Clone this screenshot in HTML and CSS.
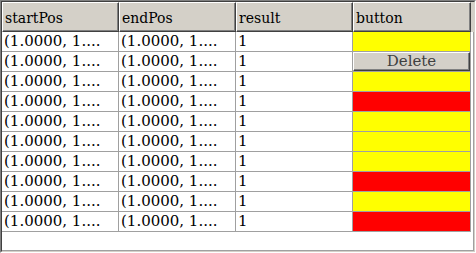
FILE: index.html
```html
<!DOCTYPE html>
<html lang="en">
<head>
    <meta charset="UTF-8">
    <title>Table</title>
    <link rel="stylesheet" href="styles.css">
</head>
<body>
    <div class="frame">
        <div class="view">
            <div class="header">
                <div class="head-cell">startPos</div>
                <div class="head-cell">endPos</div>
                <div class="head-cell">result</div>
                <div class="head-cell last">button</div>
            </div>
            <div class="rows">
                <div class="cell">(1.0000, 1....</div><div class="cell">(1.0000, 1....</div><div class="cell">1</div><div class="cell yellow"></div>
                <div class="cell">(1.0000, 1....</div><div class="cell">(1.0000, 1....</div><div class="cell">1</div><div class="cell btn-cell"><button class="delete-button">Delete</button></div>
                <div class="cell">(1.0000, 1....</div><div class="cell">(1.0000, 1....</div><div class="cell">1</div><div class="cell yellow"></div>
                <div class="cell">(1.0000, 1....</div><div class="cell">(1.0000, 1....</div><div class="cell">1</div><div class="cell red"></div>
                <div class="cell">(1.0000, 1....</div><div class="cell">(1.0000, 1....</div><div class="cell">1</div><div class="cell yellow"></div>
                <div class="cell">(1.0000, 1....</div><div class="cell">(1.0000, 1....</div><div class="cell">1</div><div class="cell yellow"></div>
                <div class="cell">(1.0000, 1....</div><div class="cell">(1.0000, 1....</div><div class="cell">1</div><div class="cell yellow"></div>
                <div class="cell">(1.0000, 1....</div><div class="cell">(1.0000, 1....</div><div class="cell">1</div><div class="cell red"></div>
                <div class="cell">(1.0000, 1....</div><div class="cell">(1.0000, 1....</div><div class="cell">1</div><div class="cell yellow"></div>
                <div class="cell">(1.0000, 1....</div><div class="cell">(1.0000, 1....</div><div class="cell">1</div><div class="cell red"></div>
            </div>
        </div>
    </div>
</body>
</html>
```

FILE: styles.css
```css
body {
    margin: 0;
    font-family: "DejaVu Serif", serif;
    font-size: 14px;
    background-color: #d4d0c8;
}

.frame {
    width: 476px;
    height: 253px;
    box-sizing: border-box;
    border: 1px solid;
    border-color: #808080 #ffffff #ffffff #808080;
}

.view {
    height: 100%;
    box-sizing: border-box;
    border: 1px solid;
    border-color: #404040 #d4d0c8 #d4d0c8 #404040;
    box-shadow: inset -1px -1px 0 #a0a0a0;
    background-color: #ffffff;
}

.header {
    display: flex;
    height: 30px;
    background-color: #d4d0c8;
}

.head-cell {
    box-sizing: border-box;
    width: 117px;
    height: 30px;
    padding-left: 2px;
    padding-top: 2px;
    display: flex;
    align-items: center;
    border: 1px solid;
    border-color: #ffffff #404040 #404040 #ffffff;
    box-shadow: inset -1px -1px 0 #808080;
    color: #000;
}

.head-cell.last {
    width: 118px;
}

.rows {
    display: grid;
    grid-template-columns: 117px 117px 117px 118px;
    grid-auto-rows: 20px;
}

.cell {
    box-sizing: border-box;
    border-right: 1px solid #a0a0a0;
    border-bottom: 1px solid #a0a0a0;
    padding-left: 2px;
    font-size: 15px;
    line-height: 19px;
    white-space: nowrap;
    overflow: hidden;
}

.yellow { background-color: #ffff00; }
.red { background-color: #ff0000; }

.btn-cell {
    padding: 0;
}

.delete-button {
    display: block;
    width: 100%;
    height: 19px;
    margin: 0;
    padding: 0;
    font-family: "DejaVu Serif", serif;
    font-size: 15px;
    line-height: 17px;
    color: #404040;
    background-color: #d4d0c8;
    border: 1px solid;
    border-color: #ffffff #404040 #404040 #ffffff;
    box-shadow: inset -1px -1px 0 #808080;
}
```
